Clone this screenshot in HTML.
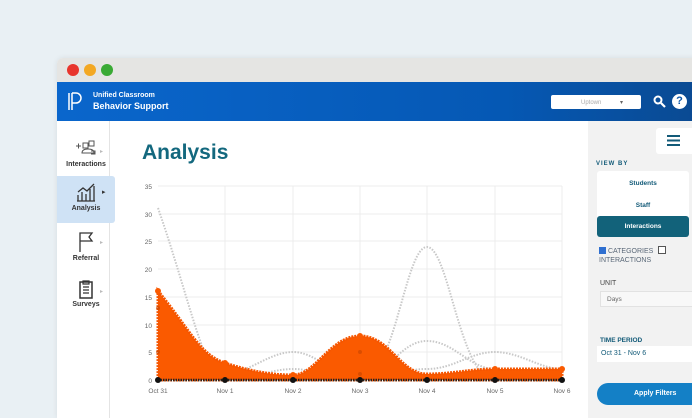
<!DOCTYPE html>
<html><head><meta charset="utf-8"><style>
*{margin:0;padding:0;box-sizing:border-box}
body{width:692px;height:413px;overflow:hidden;background:#e9f0f4;font-family:"Liberation Sans",sans-serif;position:relative}
.win{position:absolute;left:57px;top:58px;width:640px;height:360px;background:#fff;border-radius:6px 0 0 0;overflow:hidden;box-shadow:0 0 6px rgba(0,0,0,.08)}
.tb{height:24px;background:#e5e5e3;position:relative}
.dot{position:absolute;top:6px;width:12px;height:12px;border-radius:50%}
.hdr{position:absolute;top:24px;left:0;right:0;height:39px;background:linear-gradient(90deg,#0a66cc,#0558b4 70%,#0a4a92)}
.side{position:absolute;left:0;top:63px;width:53px;bottom:0;background:#fff;border-right:1px solid #e4e4e4}
.it{position:absolute;left:0;width:58px;height:47px;text-align:center;font-size:7px;font-weight:bold;color:#333}
.rp{position:absolute;left:531px;top:63px;right:0;bottom:0;background:#f2f2f2}
</style></head><body>
<div class="win">
<div class="tb"><div class="dot" style="left:10px;background:#e8352d"></div><div class="dot" style="left:27px;background:#f3a823"></div><div class="dot" style="left:44px;background:#3aaa35"></div></div>
<div class="hdr">
<svg style="position:absolute;left:11px;top:10px" width="14" height="19" viewBox="0 0 14 19"><path d="M1 1v17M4 1v17M4 1h4a5 5 0 0 1 0 10H4" fill="none" stroke="#fff" stroke-width="1.5"/></svg>
<div style="position:absolute;left:36px;top:10px;color:#fff;font-size:7px;font-weight:bold">Unified Classroom</div>
<div style="position:absolute;left:36px;top:19px;color:#fff;font-size:9px;font-weight:bold">Behavior Support</div>
<div style="position:absolute;left:494px;top:13px;width:90px;height:14px;background:#fff;border-radius:2px;font-size:6px;color:#aaa;padding:4px 0 0 30px">Uptown <span style="margin-left:17px;color:#666">▾</span></div>
<svg style="position:absolute;left:596px;top:13px" width="13" height="13" viewBox="0 0 13 13"><circle cx="5" cy="5" r="3.5" fill="none" stroke="#fff" stroke-width="2"/><path d="M8 8l4 4" stroke="#fff" stroke-width="2.2"/></svg>
<div style="position:absolute;left:615px;top:12px;width:15px;height:15px;border-radius:50%;background:#fff;color:#0a55a8;font-weight:bold;font-size:11px;text-align:center;line-height:15px">?</div>
</div>
<div class="side">
<div class="it" style="top:16px"><svg width="24" height="20" viewBox="0 0 24 20"><path d="M2 9h5M4.5 6.5v5M9 6h5v5H9zM15 4h5v5h-5zM8 16c0-3 3-4 6-4s6 1 6 4zM17 14h4v3h-4" fill="none" stroke="#555" stroke-width="1"/></svg><div style="margin-top:2px">Interactions</div></div>
<div class="it" style="top:55px;background:#cfe2f5;border-radius:0 3px 3px 0"><svg width="22" height="22" viewBox="0 0 22 22" style="margin-top:5px"><path d="M3 20V14M7 20V11M11 20V13M15 20V8M19 20V5M2 20h18M3 11l5-4 4 3 7-7" fill="none" stroke="#333" stroke-width="1.3"/></svg><div>Analysis</div></div>
<div class="it" style="top:110px"><svg width="16" height="22" viewBox="0 0 16 22"><path d="M2 21V2h12l-3 4 3 4H2" fill="none" stroke="#333" stroke-width="1.3"/></svg><div>Referral</div></div>
<div class="it" style="top:158px"><svg width="16" height="20" viewBox="0 0 16 20"><rect x="2" y="3" width="12" height="16" fill="none" stroke="#333" stroke-width="1.5"/><path d="M5 2h6v3H5zM5 8h6M5 11h6M5 14h6" stroke="#333" stroke-width="1.2" fill="none"/></svg><div>Surveys</div></div>
<div style="position:absolute;left:43px;top:27px;font-size:6px;color:#bbb">▸</div>
<div style="position:absolute;left:45px;top:67px;font-size:7px;color:#333">▸</div>
<div style="position:absolute;left:43px;top:118px;font-size:6px;color:#bbb">▸</div>
<div style="position:absolute;left:43px;top:167px;font-size:6px;color:#bbb">▸</div>
</div>
<div style="position:absolute;left:85px;top:83px;font-size:21px;font-weight:bold;color:#13687e">Analysis</div>
<div class="rp">
<div style="position:absolute;left:68px;top:7px;width:40px;height:26px;background:#fff;border-radius:3px"><svg style="position:absolute;left:11px;top:7px" width="13" height="11"><path d="M0 1h13M0 5.5h13M0 10h13" stroke="#125a78" stroke-width="2"/></svg></div>
<div style="position:absolute;left:8px;top:40px;font-size:6px;font-weight:bold;color:#125a78;letter-spacing:1px">VIEW BY</div>
<div style="position:absolute;left:9px;top:50px;width:92px;height:66px;background:#fff;border-radius:3px;font-size:6.5px;font-weight:bold;color:#125a78;text-align:center">
<div style="padding-top:9px">Students</div><div style="padding-top:15px">Staff</div></div>
<div style="position:absolute;left:9px;top:95px;width:92px;height:21px;background:#12627a;border-radius:3px;color:#fff;font-size:6.5px;font-weight:bold;text-align:center;line-height:21px">Interactions</div>
<div style="position:absolute;left:11px;top:125px;font-size:7px;color:#5a6878;line-height:9px"><span style="display:inline-block;width:7px;height:7px;background:#2f6fd0;vertical-align:-1px"></span> CATEGORIES <span style="display:inline-block;width:8px;height:8px;border:1px solid #555;background:#fff;vertical-align:-1px;margin-left:3px"></span><br>INTERACTIONS</div>
<div style="position:absolute;left:12px;top:159px;font-size:7px;color:#444">UNIT</div>
<div style="position:absolute;left:12px;top:170px;width:100px;height:16px;background:#f8f8f8;border:1px solid #e2e2e2;font-size:6.5px;color:#666;padding:4px 0 0 6px">Days</div>
<div style="position:absolute;left:12px;top:216px;font-size:6.5px;font-weight:bold;color:#125a78">TIME PERIOD</div>
<div style="position:absolute;left:9px;top:225px;width:100px;height:16px;background:#fff;font-size:7px;color:#125a78;padding:4px 0 0 4px">Oct 31 - Nov 6</div>
<div style="position:absolute;left:9px;top:262px;width:100px;height:22px;background:#1480c6;border-radius:11px 0 0 11px;color:#fff;font-size:7px;font-weight:bold;line-height:22px;padding-left:37px">Apply Filters</div>
</div>
</div>
<svg style="position:absolute;left:0;top:0" width="590" height="413">
<g stroke="#ececec" stroke-width="1">
<path d="M158 186H562M158 214H562M158 241H562M158 269H562M158 297H562M158 325H562M158 352H562"/>
<path d="M225 186V380M293 186V380M360 186V380M427 186V380M495 186V380M562 186V380"/>
</g>
<g font-size="6.5" fill="#666" text-anchor="end">
<text x="152" y="189">35</text><text x="152" y="217">30</text><text x="152" y="244">25</text><text x="152" y="272">20</text><text x="152" y="300">15</text><text x="152" y="328">10</text><text x="152" y="355">5</text><text x="152" y="383">0</text></g>
<g font-size="6.5" fill="#666" text-anchor="middle">
<text x="158" y="393">Oct 31</text><text x="225" y="393">Nov 1</text><text x="293" y="393">Nov 2</text><text x="360" y="393">Nov 3</text><text x="427" y="393">Nov 4</text><text x="495" y="393">Nov 5</text><text x="562" y="393">Nov 6</text></g>
<g fill="none" stroke="#c8c8c8" stroke-width="2" stroke-dasharray="1.5 1.5">
<path d="M158 208C190 300 205 380 225 380H360C395 380 405 247 427 247S460 380 495 380H562"/>
<path d="M158 380C190 380 200 378 225 375S270 352 293 352 330 375 360 375 400 341 427 341 470 369 495 369 540 369 562 369"/>
<path d="M158 380C190 380 200 380 225 380S270 369 293 369 330 380 360 380 400 369 427 369 470 352 495 352 540 369 562 369"/>
</g>
<path d="M158 291C190 330 200 355 225 363S270 375 293 375 330 336 360 336 400 374 427 374 470 369 495 369 540 369 562 369V380H158Z" fill="#fa5a00" stroke="#f55500" stroke-width="3" stroke-dasharray="2 1"/>
<g fill="#c84600" opacity=".6"><circle cx="158" cy="308" r="2"/><circle cx="158" cy="352" r="2"/><circle cx="360" cy="352" r="2"/><circle cx="360" cy="374" r="2"/></g>
<g fill="#fa5a00"><circle cx="158" cy="291" r="3"/><circle cx="225" cy="363" r="3"/><circle cx="293" cy="375" r="3"/><circle cx="360" cy="336" r="3"/><circle cx="495" cy="369" r="3"/><circle cx="562" cy="369" r="3"/></g>
<path d="M158 380H562" stroke="#222" stroke-width="2.5" stroke-dasharray="1.5 1"/>
<g fill="#111"><circle cx="158" cy="380" r="3"/><circle cx="225" cy="380" r="3"/><circle cx="293" cy="380" r="3"/><circle cx="360" cy="380" r="3"/><circle cx="427" cy="380" r="3"/><circle cx="495" cy="380" r="3"/><circle cx="562" cy="380" r="3"/></g>
</svg>
</body></html>
